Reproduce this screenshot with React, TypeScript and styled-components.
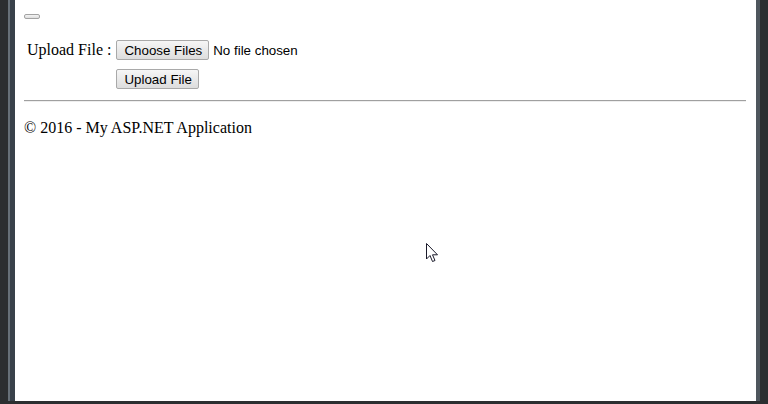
import styled, { createGlobalStyle } from "styled-components";

const GlobalStyle = createGlobalStyle`
  html, body {
    margin: 0;
    padding: 0;
    background: #2b2e30;
  }
`;

const Screen = styled.div`
  width: 768px;
  height: 404px;
  display: flex;
  background: #2b2e30;
  padding: 0 8px 3px 8px;
  box-sizing: border-box;
  overflow: hidden;
  position: relative;
`;

const WindowEdge = styled.div`
  flex: 1;
  display: flex;
  border-left: 2px solid #667078;
`;

const Page = styled.div`
  flex: 1;
  background: #ffffff;
  border-left: 5px solid #39414a;
  border-right: 4px solid #4e565d;
  padding: 14px 10px 0 9px;
  font-family: "Liberation Serif", "Times New Roman", serif;
  font-size: 16px;
  color: #000;
`;

const TinyButton = styled.div`
  width: 14px;
  height: 3px;
  border: 1px solid #a3a3a3;
  border-radius: 2px;
  background: linear-gradient(#f4f4f4, #dedede);
`;

const Form = styled.div`
  display: grid;
  grid-template-columns: auto auto;
  justify-content: start;
  column-gap: 5px;
  row-gap: 9px;
  margin-top: 21px;
  padding-left: 3px;
  align-items: center;
`;

const Label = styled.span`
  line-height: 20px;
`;

const FileField = styled.div`
  display: flex;
  align-items: center;
  gap: 4px;
  font-family: "Liberation Sans", Arial, sans-serif;
  font-size: 13.33px;
`;

const Button = styled.div`
  display: inline-flex;
  align-items: center;
  justify-content: center;
  box-sizing: border-box;
  height: 20px;
  padding: 0 6px 0 7px;
  border: 1px solid #a9a9a9;
  border-radius: 2px;
  background: linear-gradient(#f6f6f6, #dddddd);
  font-family: "Liberation Sans", Arial, sans-serif;
  font-size: 13.33px;
  color: #000;
  justify-self: start;
`;

const Rule = styled.div`
  margin-top: 11px;
  height: 1px;
  background: #a0a0a0;
  border-bottom: 1px solid #eeeeee;
`;

const Footer = styled.p`
  margin: 16px 0 0;
  line-height: 20px;
`;

const Cursor = styled.svg`
  position: absolute;
  left: 426px;
  top: 243px;
`;

export default function App() {
  return (
    <>
      <GlobalStyle />
      <Screen>
        <WindowEdge>
          <Page>
            <TinyButton />
            <Form>
              <Label>Upload File :</Label>
              <FileField>
                <Button>Choose Files</Button>
                <span>No file chosen</span>
              </FileField>
              <span />
              <Button>Upload File</Button>
            </Form>
            <Rule />
            <Footer>© 2016 - My ASP.NET Application</Footer>
          </Page>
        </WindowEdge>
        <Cursor width="13" height="20" viewBox="0 0 13 20">
          <path
            d="M0.5 0.5 L0.5 16 L4 12.5 L6.5 18.5 L9 17.5 L6.5 11.8 L11.5 11.8 Z"
            fill="#ffffff"
            stroke="#1a1a2a"
            strokeWidth="1"
            strokeLinejoin="miter"
          />
        </Cursor>
      </Screen>
    </>
  );
}
